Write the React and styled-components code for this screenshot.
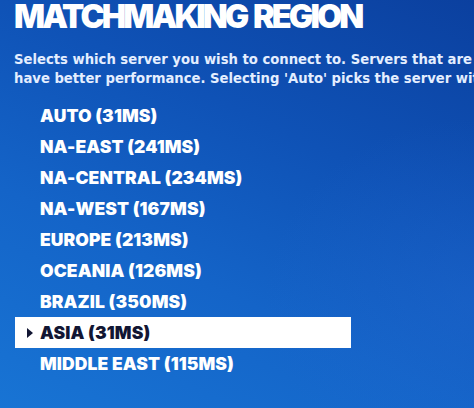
import React from "react";
import styled, { createGlobalStyle } from "styled-components";

const Global = createGlobalStyle`
  html, body {
    margin: 0;
    padding: 0;
    width: 474px;
    height: 408px;
    overflow: hidden;
  }
`;

const Screen = styled.div`
  width: 474px;
  height: 408px;
  box-sizing: border-box;
  overflow: hidden;
  padding: 1px 0 0 14px;
  background:
    radial-gradient(ellipse 300px 260px at 474px 300px, rgba(35, 105, 210, 0.35), rgba(35, 105, 210, 0) 70%),
    linear-gradient(25deg, #1874d4 0%, #1464c8 35%, #0f52b6 65%, #0b409f 100%);
  display: flex;
  flex-direction: column;
  color: #fff;
`;

const Title = styled.h1`
  margin: 0;
  font-family: Inter, "Noto Sans", sans-serif;
  font-weight: 900;
  font-size: 32.5px;
  line-height: 32px;
  letter-spacing: -2.9px;
  word-spacing: 3px;
  text-transform: uppercase;
  color: #ffffff;
  white-space: nowrap;
`;

const Description = styled.p`
  margin: 17px 0 0 0;
  font-family: "DejaVu Sans", Verdana, sans-serif;
  font-weight: 700;
  font-size: 13.2px;
  line-height: 19px;
  letter-spacing: 0;
  color: #e4eeff;
  white-space: nowrap;
`;

const RegionList = styled.ul`
  list-style: none;
  margin: 12px 0 0 1px;
  padding: 0;
  display: flex;
  flex-direction: column;
  width: 336px;
`;

const Row = styled.li`
  position: relative;
  height: 31px;
  display: flex;
  align-items: center;
  padding-left: 25px;
  font-family: Inter, "Noto Sans", sans-serif;
  font-weight: 900;
  font-size: 17.5px;
  letter-spacing: 0.1px;
  text-transform: uppercase;
  white-space: nowrap;
  color: ${(p) => (p.$selected ? "#121633" : "#ffffff")};
  background: ${(p) => (p.$selected ? "#ffffff" : "transparent")};
`;

const Caret = styled.span`
  position: absolute;
  left: 12px;
  top: 50%;
  margin-top: -5px;
  width: 0;
  height: 0;
  border-top: 5px solid transparent;
  border-bottom: 5px solid transparent;
  border-left: 6px solid #121633;
`;

const regions = [
  { name: "Auto", ping: 31 },
  { name: "NA-East", ping: 241 },
  { name: "NA-Central", ping: 234 },
  { name: "NA-West", ping: 167 },
  { name: "Europe", ping: 213 },
  { name: "Oceania", ping: 126 },
  { name: "Brazil", ping: 350 },
  { name: "Asia", ping: 31 },
  { name: "Middle East", ping: 115 },
];

export default function App() {
  const selected = "Asia";
  return (
    <>
      <Global />
      <Screen>
        <Title>Matchmaking Region</Title>
        <Description>
          Selects which server you wish to connect to. Servers that are closer to you will
          <br />
          have better performance. Selecting 'Auto' picks the server with the best ping.
        </Description>
        <RegionList>
          {regions.map((r) => (
            <Row key={r.name} $selected={r.name === selected}>
              {r.name === selected && <Caret />}
              {r.name} ({r.ping}ms)
            </Row>
          ))}
        </RegionList>
      </Screen>
    </>
  );
}
